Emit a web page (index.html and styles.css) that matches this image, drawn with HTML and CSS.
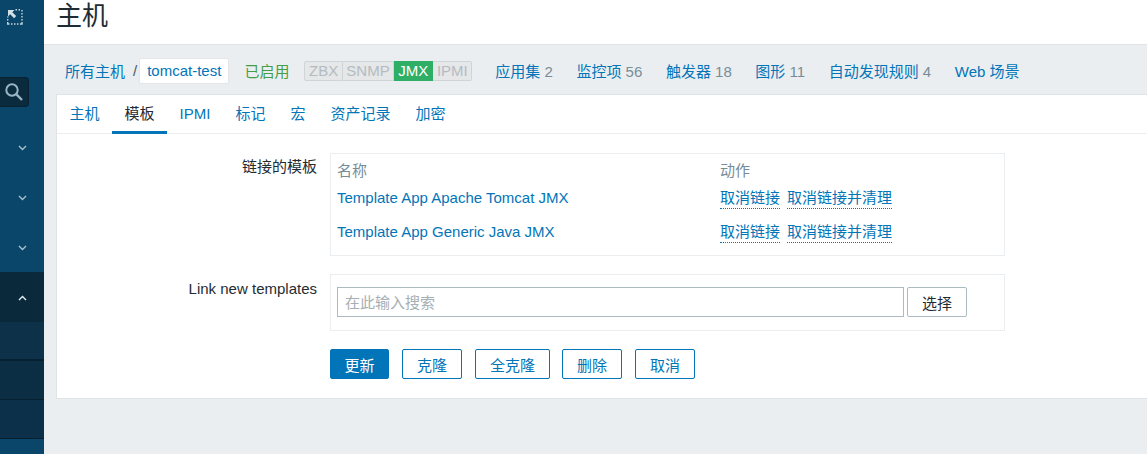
FILE: index.html
```html
<!DOCTYPE html>
<html lang="zh">
<head>
<meta charset="utf-8">
<title>主机</title>
<link rel="stylesheet" href="styles.css">
</head>
<body>
<div class="app">
  <aside class="sidebar">
    <div class="side-top">
      <svg class="collapse" width="16" height="16" viewBox="0 0 16 16" fill="none">
        <path d="M8.500 .7H10M11.500 .7H13M15 1V2.500M15 4V5.500M15 7V8.500M15 10V11.500M15 13V15H13M11.500 15H10M8.500 15H7M5.500 15H4M2.500 15H.7V13M.7 11.500V10M.7 8.500V7.500" stroke="#c3d3dc" stroke-width="1.400"/>
        <path d="M1 1H7.500L5.300 3.200L9.200 7.100L7.100 9.200L3.200 5.300L1 7.500Z" fill="#d3e0e7"/>
      </svg>
    </div>
    <div class="side-search">
      <svg width="20" height="20" viewBox="0 0 20 20" fill="none">
        <circle cx="8" cy="8" r="5.700" stroke="#9ab5c4" stroke-width="2"/>
        <path d="M12.200 12.200L18 18" stroke="#9ab5c4" stroke-width="2.400"/>
      </svg>
    </div>
    <div class="side-menu">
      <div class="side-row"><svg class="chev" width="9" height="6" viewBox="0 0 9 6" fill="none"><path d="M1 1L4.500 4.500L8 1" stroke="#a9c0cd" stroke-width="1.400"/></svg></div>
      <div class="side-row"><svg class="chev" width="9" height="6" viewBox="0 0 9 6" fill="none"><path d="M1 1L4.500 4.500L8 1" stroke="#a9c0cd" stroke-width="1.400"/></svg></div>
      <div class="side-row"><svg class="chev" width="9" height="6" viewBox="0 0 9 6" fill="none"><path d="M1 1L4.500 4.500L8 1" stroke="#a9c0cd" stroke-width="1.400"/></svg></div>
      <div class="side-row active"><svg class="chev" width="9" height="6" viewBox="0 0 9 6" fill="none"><path d="M1 5L4.500 1.500L8 5" stroke="#e6edf1" stroke-width="1.400"/></svg></div>
      <div class="side-sub"></div>
      <div class="side-sub"></div>
      <div class="side-sub"></div>
    </div>
  </aside>
  <main class="main">
    <header class="page-head"><h1 class="page-title">主机</h1></header>
    <div class="content">
      <nav class="host-nav">
        <a class="crumb" href="#">所有主机</a>
        <span class="crumb-sep">/</span>
        <a class="crumb-current" href="#">tomcat-test</a>
        <span class="status-on">已启用</span>
        <div class="avail">
          <span class="av">ZBX</span><span class="av">SNMP</span><span class="av on">JMX</span><span class="av">IPMI</span>
        </div>
        <a class="nav-item first" href="#">应用集 <span class="count">2</span></a>
        <a class="nav-item" href="#">监控项 <span class="count">56</span></a>
        <a class="nav-item" href="#">触发器 <span class="count">18</span></a>
        <a class="nav-item" href="#">图形 <span class="count">11</span></a>
        <a class="nav-item" href="#">自动发现规则 <span class="count">4</span></a>
        <a class="nav-item" href="#">Web 场景</a>
      </nav>
      <section class="card">
        <div class="tabs">
          <a class="tab" href="#">主机</a>
          <a class="tab selected" href="#">模板</a>
          <a class="tab" href="#">IPMI</a>
          <a class="tab" href="#">标记</a>
          <a class="tab" href="#">宏</a>
          <a class="tab" href="#">资产记录</a>
          <a class="tab" href="#">加密</a>
        </div>
        <div class="form">
          <div class="form-row">
            <div class="form-label">链接的模板</div>
            <div class="box linked">
              <div class="grid-row head"><span>名称</span><span>动作</span></div>
              <div class="grid-row">
                <a class="link" href="#">Template App Apache Tomcat JMX</a>
                <span class="actions"><a class="dotted" href="#">取消链接</a><a class="dotted" href="#">取消链接并清理</a></span>
              </div>
              <div class="grid-row">
                <a class="link" href="#">Template App Generic Java JMX</a>
                <span class="actions"><a class="dotted" href="#">取消链接</a><a class="dotted" href="#">取消链接并清理</a></span>
              </div>
            </div>
          </div>
          <div class="form-row second">
            <div class="form-label">Link new templates</div>
            <div class="box picker">
              <input class="search" type="text" placeholder="在此输入搜索">
              <button class="select-btn" type="button">选择</button>
            </div>
          </div>
          <div class="buttons">
            <button class="btn primary" type="button">更新</button>
            <button class="btn" type="button">克隆</button>
            <button class="btn wide" type="button">全克隆</button>
            <button class="btn" type="button">删除</button>
            <button class="btn" type="button">取消</button>
          </div>
        </div>
      </section>
    </div>
  </main>
</div>
</body>
</html>
```
FILE: styles.css
```css
* { box-sizing: border-box; }
html, body { margin: 0; height: 100%; overflow: hidden; }
body {
  font-family: "Liberation Sans", "Noto Sans CJK SC", sans-serif;
  font-size: 15px;
  color: #1f2c33;
  background: #ebeef0;
}
a { color: #0275b8; text-decoration: none; }
.app { display: flex; height: 454px; }

.sidebar {
  width: 44px;
  flex: none;
  background: #0a466a;
  display: flex;
  flex-direction: column;
  overflow: hidden;
}
.side-top { height: 77px; padding: 9px 0 0 7px; }
.collapse { display: block; }
.side-search {
  width: 29px;
  height: 30px;
  background: #0a2a3e;
  border: 1px solid #08202f;
  border-left: 0;
  border-radius: 0 4px 4px 0;
  padding: 4px 0 0 4px;
}
.side-search svg { display: block; }
.side-menu { padding-top: 15px; }
.side-row {
  height: 50px;
  display: flex;
  align-items: center;
  padding: 2px 0 0 18px;
}
.side-row.active { background: #0a2a3c; }
.side-sub {
  height: 39px;
  background: #0e314a;
  border-bottom: 2px solid #07202f;
}
.side-sub + .side-sub { background: #0c2e45; border-bottom-width: 1px; }
.side-sub:last-child { background: #0c3049; height: 39px; }

.main { flex: 1; min-width: 0; display: flex; flex-direction: column; }
.page-head {
  height: 45px;
  background: #fff;
  border-bottom: 1px solid #dfe4e7;
  padding: 1px 0 0 12px;
  flex: none;
}
.page-title {
  margin: 0;
  font-size: 26px;
  font-weight: 400;
  line-height: 30px;
  color: #1f2c33;
}
.content { padding: 0 0 0 12px; flex: 1; }

.host-nav {
  height: 49px;
  display: flex;
  align-items: center;
  white-space: nowrap;
  padding: 2px 0 0 9px;
}
.crumb-sep { margin: 0 2px 0 8px; color: #4a5a64; }
.crumb-current {
  background: #fff;
  border: 1px solid #e3e7e9;
  border-radius: 2px;
  height: 26px;
  line-height: 24px;
  padding: 0 7px;
}
.status-on { color: #429e47; margin-left: 15px; }
.avail { display: flex; margin-left: 15px; margin-right: 23px; }
.av {
  height: 20px;
  line-height: 18px;
  padding: 0 3.6px;
  color: #b4bcc1;
  background: #e5e7e8;
  border: 1px solid #cfd4d7;
  border-left-width: 0;
}
.av:first-child { border-left-width: 1px; border-radius: 2px 0 0 2px; }
.av:last-child { border-radius: 0 2px 2px 0; }
.av.on { background: #2fae66; border-color: #2fae66; color: #fff; padding: 0 4px; }
.nav-item { margin-right: 23.6px; }
.count { color: #768d99; }

.card {
  background: #fff;
  border: 1px solid #dfe4e7;
  border-right: 0;
  height: 305px;
}
.tabs {
  height: 39px;
  border-bottom: 1px solid #ebeef0;
  display: flex;
}
.tab { height: 39px; padding: 9px 12.5px 0; line-height: 20px; }
.tab.selected { color: #1f2c33; border-bottom: 3px solid #0275b8; }

.form { padding-top: 19px; }
.form-row { display: flex; }
.form-row.second { margin-top: 18px; }
.form-label {
  width: 260px;
  text-align: right;
  padding: 5px 0 0;
  margin-right: 13px;
  line-height: 18px;
}
.form-row.second .form-label { padding-top: 6px; }
.box { width: 675px; border: 1px solid #ebeef0; }
.linked { height: 103px; padding: 5px 6px; }
.grid-row {
  display: grid;
  grid-template-columns: 383px 1fr;
  height: 34px;
  line-height: 26px;
}
.grid-row.head { height: 26px; color: #768d99; line-height: 24px; }
.actions { display: flex; gap: 7px; align-items: flex-start; line-height: 20px; padding-top: 3px; }
.dotted { border-bottom: 1px dotted #0275b8; }
.picker { height: 57px; padding: 12px 6px; display: flex; gap: 3px; }
.search {
  width: 567px;
  height: 30px;
  border: 1px solid #acbbc2;
  padding: 0 7px;
  font: inherit;
  outline: 0;
}
.search::placeholder { color: #a5afb5; opacity: 1; }
.select-btn {
  width: 60px;
  height: 30px;
  background: #fff;
  border: 1px solid #acbbc2;
  border-radius: 2px;
  font: inherit;
  color: #1f2c33;
  padding: 0;
}
.buttons { display: flex; gap: 13px; margin: 18px 0 0 273px; }
.btn {
  height: 30px;
  width: 60px;
  background: #fff;
  border: 1px solid #0275b8;
  border-radius: 2px;
  color: #0275b8;
  font: inherit;
  padding: 0;
}
.btn.primary { background: #0275b8; color: #fff; width: 59px; }
.btn.wide { width: 75px; margin-right: -1px; }
```
